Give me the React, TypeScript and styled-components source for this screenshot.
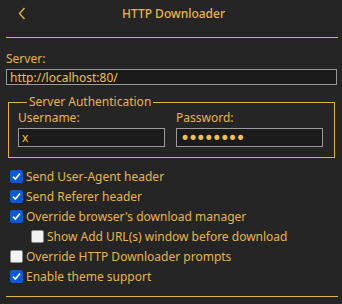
import React from 'react';
import styled, { createGlobalStyle } from 'styled-components';

const GlobalStyle = createGlobalStyle`
  html, body {
    margin: 0;
    padding: 0;
    background: #252525;
  }
  * {
    box-sizing: border-box;
  }
`;

const Page = styled.div`
  width: 342px;
  height: 304px;
  background: #252525;
  color: #e8b54a;
  font-family: 'Noto Sans', 'Open Sans', sans-serif;
  font-size: 12px;
  overflow: hidden;
`;

const Header = styled.div`
  position: relative;
  height: 38px;
  display: flex;
  align-items: center;
  justify-content: center;
  margin: 0 4px 0 6px;
  border-bottom: 1px solid #e3b13d;
`;

const BackButton = styled.button`
  position: absolute;
  left: 12px;
  top: 7px;
  width: 12px;
  height: 14px;
  padding: 0;
  border: none;
  background: none;
  display: flex;
  cursor: pointer;
`;

const Title = styled.div`
  font-size: 12px;
  font-weight: 500;
  color: #e8b54a;
  margin: -10px 0 0 3px;
`;

const Body = styled.div`
  padding: 13px 5px 0 6px;
  display: flex;
  flex-direction: column;
`;

const Label = styled.label`
  display: block;
  line-height: 16px;
  height: 16px;
`;

const TextBox = styled.input<{ $width?: number; $dots?: boolean }>`
  display: block;
  width: ${props => (props.$width ? `${props.$width}px` : '100%')};
  height: ${props => (props.$width ? '19px' : '16px')};
  margin-top: 2px;
  padding: 0 3px;
  background: #1b1b1b;
  border: 1px solid #9a9a9a;
  color: #f0c14c;
  font-family: ${props => (props.$dots ? "'DejaVu Sans', sans-serif" : 'inherit')};
  font-size: ${props => (props.$dots ? '17px' : '12px')};
  letter-spacing: ${props => (props.$dots ? '-2.1px' : '0')};
  outline: none;
`;

const Fieldset = styled.fieldset`
  margin: 11px 2px 0 2px;
  padding: 0 0 8px 9px;
  border: 1px solid #e3b13d;
  height: 62px;
`;

const Legend = styled.legend`
  padding: 0 2px;
  margin-left: 9px;
  line-height: 12px;
`;

const AuthRow = styled.div`
  display: flex;
  gap: 11px;
  margin-top: 2px;
`;

const AuthField = styled.div`
  display: flex;
  flex-direction: column;
`;

const Options = styled.div`
  margin-top: 12px;
  padding-left: 4px;
  display: flex;
  flex-direction: column;
  gap: 7px;
`;

const OptionRow = styled.div<{ $indent?: boolean }>`
  display: flex;
  align-items: center;
  gap: 3px;
  height: 13px;
  padding-left: ${props => (props.$indent ? '21px' : '0')};
  line-height: 13px;
`;

const Box = styled.span<{ $checked: boolean }>`
  width: 13px;
  height: 13px;
  flex: none;
  border-radius: 2px;
  display: flex;
  align-items: center;
  justify-content: center;
  background: ${props => (props.$checked ? '#0a5ad6' : '#f2f2f2')};
  border: 1px solid ${props => (props.$checked ? '#0a5ad6' : '#8a8a8a')};
`;

const Footer = styled.div`
  margin: 13px 4px 0 6px;
  border-top: 1px solid #e3b13d;
`;

const Check = ({ checked }: { checked: boolean }) => (
  <Box $checked={checked}>
    {checked && (
      <svg width="9" height="9" viewBox="0 0 9 9">
        <path d="M1 4.6 L3.4 7 L8 1.6" fill="none" stroke="#fff" strokeWidth="1.6" />
      </svg>
    )}
  </Box>
);

const options = [
  { text: 'Send User-Agent header', checked: true },
  { text: 'Send Referer header', checked: true },
  { text: "Override browser's download manager", checked: true },
  { text: 'Show Add URL(s) window before download', checked: false, indent: true },
  { text: 'Override HTTP Downloader prompts', checked: false },
  { text: 'Enable theme support', checked: true },
];

const App = () => {
  return (
    <>
      <GlobalStyle />
      <Page>
        <Header>
          <BackButton aria-label="Back">
            <svg width="8" height="13" viewBox="0 0 8 13">
              <path d="M6.5 1 L1.5 6.5 L6.5 12" fill="none" stroke="#e3b13d" strokeWidth="1.4" />
            </svg>
          </BackButton>
          <Title>HTTP Downloader</Title>
        </Header>
        <Body>
          <Label>Server:</Label>
          <TextBox defaultValue="http://localhost:80/" readOnly />
          <Fieldset>
            <Legend>Server Authentication</Legend>
            <AuthRow>
              <AuthField>
                <Label>Username:</Label>
                <TextBox $width={147} defaultValue="x" readOnly />
              </AuthField>
              <AuthField>
                <Label>Password:</Label>
                <TextBox $width={147} $dots type="password" defaultValue="xxxxxxxx" readOnly />
              </AuthField>
            </AuthRow>
          </Fieldset>
          <Options>
            {options.map(o => (
              <OptionRow key={o.text} $indent={o.indent}>
                <Check checked={o.checked} />
                <span>{o.text}</span>
              </OptionRow>
            ))}
          </Options>
        </Body>
        <Footer />
      </Page>
    </>
  );
};

export default App;
